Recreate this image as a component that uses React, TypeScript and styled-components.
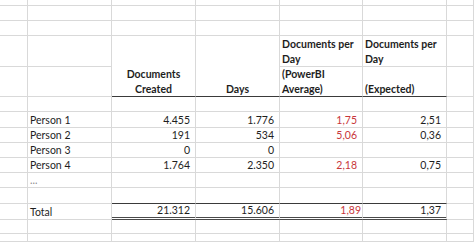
import React from "react";
import styled, { createGlobalStyle, css } from "styled-components";

const Global = createGlobalStyle`
  html, body { margin: 0; padding: 0; background: #ffffff; }
  #root { width: 474px; height: 242px; overflow: hidden; }
`;

const Sheet = styled.div`
  display: grid;
  width: 474px;
  height: 242px;
  grid-template-columns: 28px 84px 84px 84px 83px 84px 1fr;
  grid-template-rows: 6px 15px 15px 31px 30px 15px 16px 15px 15px 15px 15px 16px 16px 14px 1fr;
  font-family: Lato, "Open Sans", Arial, sans-serif;
  font-size: 10.5px;
  color: #1e1e1e;
  background: #fff;
`;

type Align = "left" | "right" | "center";
type Edge = "grid" | "thin" | "double";

const edges: Record<Edge, ReturnType<typeof css>> = {
  grid: css`border-bottom: 1px solid #d9d9d9;`,
  thin: css`border-bottom: 1px solid #3a3a3a;`,
  double: css`border-bottom: 3px double #4a4a4a;`,
};

const Cell = styled.div<{
  $align?: Align;
  $bold?: boolean;
  $red?: boolean;
  $muted?: boolean;
  $edge?: Edge;
  $span?: number;
  $pr?: number;
}>`
  box-sizing: border-box;
  display: flex;
  flex-direction: column;
  justify-content: flex-end;
  align-items: ${({ $align }) =>
    $align === "right" ? "flex-end" : $align === "center" ? "center" : "flex-start"};
  text-align: ${({ $align }) => $align || "left"};
  border-right: 1px solid #d9d9d9;
  ${({ $edge }) => edges[$edge || "grid"]}
  ${({ $span }) => ($span ? `grid-row: span ${$span};` : "")}
  padding: 0 ${({ $pr }) => ($pr ?? 5)}px 0 2px;
  font-weight: ${({ $bold }) => ($bold ? 700 : 400)};
  color: ${({ $red, $muted }) => ($red ? "#c8363a" : $muted ? "#8a8a8a" : "#1e1e1e")};
  white-space: nowrap;
  overflow: visible;
`;

const Text = styled.span`
  line-height: 15px;
  margin-bottom: -1px;
`;

type C = {
  t?: React.ReactNode;
  a?: Align;
  b?: boolean;
  red?: boolean;
  muted?: boolean;
  e?: Edge;
  span?: number;
  pr?: number;
  skip?: boolean;
};

const blank: C = {};

const header3: C[] = [
  blank,
  blank,
  { t: <>Documents<br />Created</>, a: "center", b: true, span: 2, e: "thin", pr: 2 },
  { t: "Days", a: "center", b: true, span: 2, e: "thin", pr: 2 },
  { t: <>Documents per<br />Day</>, b: true },
  { t: <>Documents per<br />Day</>, b: true },
  blank,
];

const header4: C[] = [
  blank,
  blank,
  { skip: true },
  { skip: true },
  { t: <>(PowerBI<br />Average)</>, b: true, e: "thin" },
  { t: "(Expected)", b: true, e: "thin" },
  blank,
];

const dataRow = (label: string, a: string, b: string, c: string, d: string): C[] => [
  blank,
  { t: label },
  { t: a, a: "right" },
  { t: b, a: "right" },
  { t: c, a: "right", red: true },
  { t: d, a: "right" },
  blank,
];

const emptyRow = (): C[] => Array.from({ length: 7 }, () => blank);

const rows: C[][] = [
  emptyRow(),
  emptyRow(),
  emptyRow(),
  header3,
  header4,
  emptyRow(),
  dataRow("Person 1", "4.455", "1.776", "1,75", "2,51"),
  dataRow("Person 2", "191", "534", "5,06", "0,36"),
  dataRow("Person 3", "0", "0", "", ""),
  dataRow("Person 4", "1.764", "2.350", "2,18", "0,75"),
  [blank, { t: "...", muted: true }, blank, blank, blank, blank, blank],
  [blank, blank, { e: "thin" }, { e: "thin" }, { e: "thin" }, { e: "thin" }, blank],
  [
    blank,
    { t: "Total" },
    { t: "21.312", a: "right", e: "double" },
    { t: "15.606", a: "right", e: "double" },
    { t: "1,89", a: "right", red: true, e: "double", pr: 1 },
    { t: "1,37", a: "right", e: "double" },
    blank,
  ],
  emptyRow(),
  emptyRow(),
];

export default function App() {
  return (
    <>
      <Global />
      <Sheet>
        {rows.map((row, r) =>
          row.map((c, i) =>
            c.skip ? null : (
              <Cell
                key={`${r}-${i}`}
                $align={c.a}
                $bold={c.b}
                $red={c.red}
                $muted={c.muted}
                $edge={c.e}
                $span={c.span}
                $pr={c.pr}
              >
                {c.t !== undefined && c.t !== "" ? <Text>{c.t}</Text> : null}
              </Cell>
            )
          )
        )}
      </Sheet>
    </>
  );
}
